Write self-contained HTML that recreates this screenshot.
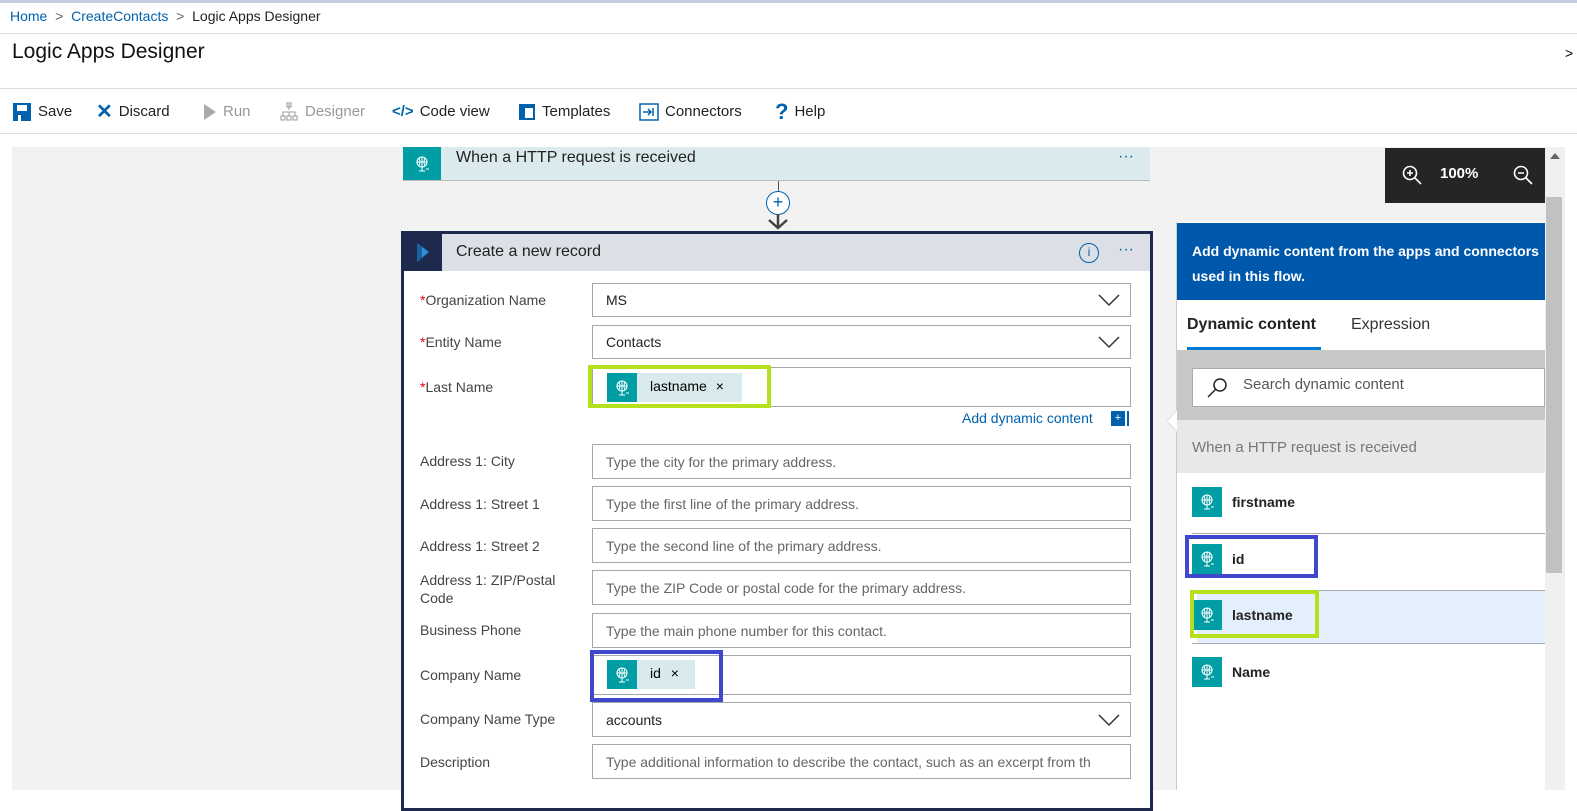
<!DOCTYPE html>
<html><head><meta charset="utf-8"><style>
*{box-sizing:border-box;margin:0;padding:0}
body{width:1577px;height:790px;overflow:hidden;background:#fff;font-family:"Segoe UI","Liberation Sans",sans-serif;color:#000;position:relative}
.a{position:absolute}
.lbl{position:absolute;left:420px;font-size:14px;color:#444}
.lbl b{color:#e00;font-weight:normal}
.inp{position:absolute;left:592px;width:539px;border:1px solid #a6a6a6;background:#fff;font-size:14px;padding-left:13px;display:flex;align-items:center;color:#222}
.ph{color:#666}
.chev{position:absolute;right:10px;top:50%;margin-top:-7px}
.ic{background:#009da5;display:flex;align-items:center;justify-content:center}
.tb{position:absolute;top:100px;height:24px;line-height:24px;font-size:15px;color:#222;display:flex;align-items:center;gap:6px}
.item{position:absolute;left:1192px;font-size:14px;display:flex;align-items:center;gap:10px;font-weight:600;color:#222}
</style></head><body>
<svg width="0" height="0" style="position:absolute"><defs><g id="gl"><circle cx="0" cy="-2" r="5" fill="none" stroke="#fff" stroke-width="1.1"/><path d="M-5-2H5M0-7V3M-3-6Q-1-2-3 2M3-6Q1-2 3 2M0 3V7M-3 7H3M4 5h3" stroke="#fff" stroke-width="1" fill="none"/></g></defs></svg>
<div class="a" style="left:0;top:0;width:1577px;height:3px;background:#c5cfe0"></div>
<div class="a" style="left:10px;top:8px;font-size:14px;color:#0062ad">Home <span style="color:#666">&nbsp;&gt;&nbsp;</span> CreateContacts <span style="color:#666">&nbsp;&gt;&nbsp;</span> <span style="color:#222">Logic Apps Designer</span></div>
<div class="a" style="left:0;top:33px;width:1577px;height:1px;background:#ddd"></div>
<div class="a" style="left:12px;top:40px;font-size:21px;color:#111">Logic Apps Designer</div>
<div class="a" style="left:0;top:88px;width:1577px;height:1px;background:#ddd"></div>
<div class="tb" style="left:12px"><svg width="20" height="20"><path d="M1 1h18v18H1z" fill="#0062ad"/><rect x="5" y="3" width="10" height="6" fill="#fff"/><rect x="6" y="13" width="3" height="6" fill="#fff"/></svg>Save</div>
<div class="tb" style="left:96px"><span style="color:#0062ad;font-weight:bold;font-size:20px">✕</span>Discard</div>
<div class="tb" style="left:203px;color:#999"><svg width="14" height="18"><path d="M1 1l12 8-12 8z" fill="#aaa"/></svg>Run</div>
<div class="tb" style="left:279px;color:#999"><svg width="20" height="20"><path d="M10 2v6M4 14v-4h12v4M10 10v4" stroke="#999" fill="none"/><rect x="8" y="1" width="4" height="4" fill="none" stroke="#999"/><rect x="2" y="14" width="4" height="4" fill="none" stroke="#999"/><rect x="8" y="14" width="4" height="4" fill="none" stroke="#999"/><rect x="14" y="14" width="4" height="4" fill="none" stroke="#999"/></svg>Designer</div>
<div class="tb" style="left:392px"><span style="color:#0062ad;font-weight:bold">&lt;/&gt;</span>Code view</div>
<div class="tb" style="left:518px"><svg width="18" height="18"><rect x="1" y="1" width="16" height="16" fill="#0062ad"/><rect x="3" y="5" width="12" height="10" fill="#fff"/><rect x="3" y="5" width="4" height="10" fill="#0062ad"/></svg>Templates</div>
<div class="tb" style="left:639px"><svg width="20" height="18"><rect x="1" y="1" width="18" height="16" fill="none" stroke="#0062ad" stroke-width="1.5"/><path d="M4 9h8M9 6l3 3-3 3M14 5v8" stroke="#0062ad" fill="none" stroke-width="1.5"/></svg>Connectors</div>
<div class="tb" style="left:775px"><span style="color:#0062ad;font-weight:bold;font-size:22px;line-height:24px">?</span>Help</div>
<div class="a" style="left:0;top:133px;width:1577px;height:1px;background:#ddd"></div>
<div class="a" style="left:12px;top:147px;width:1533px;height:643px;background:#f2f2f2"></div>
<div class="a" style="left:403px;top:147px;width:747px;height:34px;background:#dbeaed;border-bottom:1px solid #bbb"></div>
<div class="a ic" style="left:403px;top:147px;width:38px;height:33px"><svg width="20" height="20" viewBox="-10 -10 20 20"><use href="#gl"/></svg></div>
<div class="a" style="left:456px;top:149px;font-size:16px;color:#222">When a HTTP request is received</div>
<div class="a" style="left:1118px;top:148px;color:#0062ad;font-size:16px">···</div>
<div class="a" style="left:778px;top:181px;width:1px;height:10px;background:#555"></div>
<div class="a" style="left:766px;top:191px;width:24px;height:24px;border:1px solid #0062ad;border-radius:50%;background:#fff;color:#0062ad;text-align:center;line-height:20px;font-size:18px">+</div>
<svg class="a" style="left:766px;top:214px" width="24" height="16"><path d="M12 0v14M3 6l9 8 9-8" stroke="#444" stroke-width="2.5" fill="none"/></svg>
<div class="a" style="left:401px;top:231px;width:752px;height:580px;border:3px solid #1d2a4e;background:#fff"></div>
<div class="a" style="left:404px;top:234px;width:746px;height:37px;background:#dcdfe5"></div>
<div class="a" style="left:404px;top:234px;width:38px;height:37px;background:#1d2a4e"><svg width="38" height="37"><path d="M13 9l12 9-12 10z" fill="#2f8fd8"/><path d="M13 9l5 4v11l-5 4z" fill="#1a5fa0"/></svg></div>
<div class="a" style="left:456px;top:243px;font-size:16px;color:#222">Create a new record</div>
<div class="a" style="left:1079px;top:243px;width:20px;height:20px;border:1.5px solid #0062ad;border-radius:50%;color:#0062ad;font-size:12px;text-align:center;line-height:17px">i</div>
<div class="a" style="left:1118px;top:241px;color:#0062ad;font-size:16px">···</div>
<div class="lbl" style="top:292px"><b>*</b>Organization Name</div>
<div class="inp" style="top:283px;height:34px">MS<svg class="chev" width="22" height="14"><path d="M1 2l10 10 10-10" stroke="#333" fill="none" stroke-width="1.5"/></svg></div>
<div class="lbl" style="top:334px"><b>*</b>Entity Name</div>
<div class="inp" style="top:325px;height:34px">Contacts<svg class="chev" width="22" height="14"><path d="M1 2l10 10 10-10" stroke="#333" fill="none" stroke-width="1.5"/></svg></div>
<div class="lbl" style="top:379px"><b>*</b>Last Name</div>
<div class="inp" style="top:367px;height:40px"></div>
<div class="a" style="left:588px;top:365px;width:183px;height:43px;border:4px solid #b4e01e"></div>
<div class="a ic" style="left:607px;top:373px;width:30px;height:29px"><svg width="20" height="20" viewBox="-10 -10 20 20"><use href="#gl"/></svg></div>
<div class="a" style="left:637px;top:373px;width:105px;height:29px;background:#d8eaed;font-size:14px;padding:5px 0 0 13px">lastname <span style="margin-left:5px">×</span></div>
<div class="a" style="left:962px;top:410px;font-size:14px;color:#0062ad">Add dynamic content</div>
<div class="a" style="left:1111px;top:411px;width:14px;height:15px;background:#0062ad;color:#fff;font-size:11px;text-align:center;line-height:15px">+</div>
<div class="a" style="left:1127px;top:411px;width:2px;height:15px;background:#0062ad"></div>
<div class="lbl" style="top:453px">Address 1: City</div>
<div class="inp ph" style="top:444px;height:35px">Type the city for the primary address.</div>
<div class="lbl" style="top:496px">Address 1: Street 1</div>
<div class="inp ph" style="top:486px;height:35px">Type the first line of the primary address.</div>
<div class="lbl" style="top:538px">Address 1: Street 2</div>
<div class="inp ph" style="top:528px;height:35px">Type the second line of the primary address.</div>
<div class="lbl" style="top:571px;line-height:18px">Address 1: ZIP/Postal<br>Code</div>
<div class="inp ph" style="top:570px;height:35px">Type the ZIP Code or postal code for the primary address.</div>
<div class="lbl" style="top:622px">Business Phone</div>
<div class="inp ph" style="top:613px;height:35px">Type the main phone number for this contact.</div>
<div class="lbl" style="top:667px">Company Name</div>
<div class="inp" style="top:655px;height:40px"></div>
<div class="a" style="left:590px;top:650px;width:133px;height:52px;border:4px solid #3f48cc"></div>
<div class="a ic" style="left:607px;top:660px;width:30px;height:29px"><svg width="20" height="20" viewBox="-10 -10 20 20"><use href="#gl"/></svg></div>
<div class="a" style="left:637px;top:660px;width:58px;height:29px;background:#d8eaed;font-size:14px;padding:5px 0 0 13px">id <span style="margin-left:6px">×</span></div>
<div class="lbl" style="top:711px">Company Name Type</div>
<div class="inp" style="top:702px;height:35px">accounts<svg class="chev" width="22" height="14"><path d="M1 2l10 10 10-10" stroke="#333" fill="none" stroke-width="1.5"/></svg></div>
<div class="lbl" style="top:754px">Description</div>
<div class="inp ph" style="top:744px;height:35px;white-space:nowrap;overflow:hidden">Type additional information to describe the contact, such as an excerpt from th</div>
<div class="a" style="left:1385px;top:148px;width:165px;height:55px;background:#252525;color:#fff;font-size:15px;font-weight:bold"><span class="a" style="left:55px;top:17px">100%</span>
<svg class="a" style="left:16px;top:16px" width="22" height="22"><circle cx="9" cy="9" r="6.5" stroke="#fff" stroke-width="1.6" fill="none"/><path d="M14 14l6 6M6 9h6M9 6v6" stroke="#fff" stroke-width="1.6"/></svg>
<svg class="a" style="left:127px;top:16px" width="22" height="22"><circle cx="9" cy="9" r="6.5" stroke="#fff" stroke-width="1.6" fill="none"/><path d="M14 14l6 6M6 9h6" stroke="#fff" stroke-width="1.6"/></svg></div>
<div class="a" style="left:1176px;top:222px;width:370px;height:568px;background:#fff;border-left:1px solid #ccc"></div>
<svg class="a" style="left:1166px;top:410px" width="12" height="22"><path d="M11 0L1 11l10 11" fill="#fff" stroke="#ddd"/></svg>
<div class="a" style="left:1177px;top:223px;width:368px;height:77px;background:#0058ad;color:#fff;font-size:14px;font-weight:600;padding:16px 0 0 15px;line-height:25px;white-space:nowrap;overflow:hidden">Add dynamic content from the apps and connectors<br>used in this flow.</div>
<div class="a" style="left:1187px;top:316px;font-size:16px;font-weight:600;color:#222">Dynamic content</div>
<div class="a" style="left:1187px;top:347px;width:134px;height:3px;background:#0078d4"></div>
<div class="a" style="left:1351px;top:316px;font-size:16px;color:#333">Expression</div>
<div class="a" style="left:1177px;top:350px;width:368px;height:70px;background:#c8c8c6"></div>
<div class="a" style="left:1192px;top:368px;width:353px;height:39px;background:#fff;border:1px solid #aaa;font-size:15px;color:#555;padding:7px 0 0 50px">Search dynamic content</div>
<svg class="a" style="left:1206px;top:376px" width="24" height="24"><circle cx="14" cy="9" r="6" stroke="#222" stroke-width="1.5" fill="none"/><path d="M10 13l-8 8" stroke="#222" stroke-width="1.5"/></svg>
<div class="a" style="left:1177px;top:420px;width:368px;height:53px;background:#e8e9e7;font-size:15px;color:#777;padding:19px 0 0 15px">When a HTTP request is received</div>
<div class="a" style="left:1192px;top:533px;width:353px;height:1px;background:#aaa"></div>
<div class="a" style="left:1197px;top:590px;width:348px;height:53px;background:#e3effd"></div>
<div class="a" style="left:1192px;top:590px;width:353px;height:1px;background:#aaa"></div>
<div class="a" style="left:1192px;top:643px;width:353px;height:1px;background:#aaa"></div>
<div class="item" style="top:487px"><div class="ic" style="width:30px;height:30px"><svg width="20" height="20" viewBox="-10 -10 20 20"><use href="#gl"/></svg></div>firstname</div>
<div class="item" style="top:544px"><div class="ic" style="width:30px;height:30px"><svg width="20" height="20" viewBox="-10 -10 20 20"><use href="#gl"/></svg></div>id</div>
<div class="a" style="left:1185px;top:535px;width:133px;height:43px;border:4px solid #3f48cc"></div>
<div class="item" style="top:600px"><div class="ic" style="width:30px;height:30px"><svg width="20" height="20" viewBox="-10 -10 20 20"><use href="#gl"/></svg></div>lastname</div>
<div class="a" style="left:1190px;top:590px;width:129px;height:48px;border:4px solid #b4e01e"></div>
<div class="item" style="top:657px"><div class="ic" style="width:30px;height:30px"><svg width="20" height="20" viewBox="-10 -10 20 20"><use href="#gl"/></svg></div>Name</div>
<div class="a" style="left:1545px;top:147px;width:20px;height:643px;background:#f0f0f0"></div>
<svg class="a" style="left:1550px;top:153px" width="10" height="6"><path d="M0 6L5 0l5 6z" fill="#666"/></svg>
<div class="a" style="left:1546px;top:197px;width:16px;height:376px;background:#c1c1c1"></div>
<div class="a" style="left:1565px;top:45px;font-size:14px">&gt;</div>
</body></html>
